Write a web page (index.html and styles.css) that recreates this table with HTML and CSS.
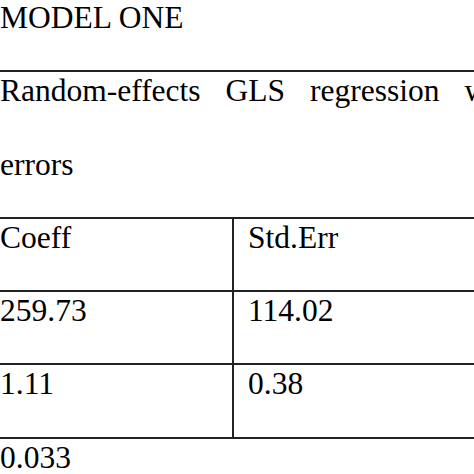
FILE: index.html
```html
<html>
    <head>
        <meta charset="UTF-8">
        <title>Model one</title>
        <meta name="viewport" content="width=device-width, initial-scale=1.0">
        <link rel="stylesheet" href="styles.css">
    </head>
    <body>
        <div class="sheet">
            <div class="row">
                <div class="cell cell-wide"><p>MODEL ONE</p></div>
            </div>
            <div class="row">
                <div class="cell cell-wide">
                    <p>
                        <span class="line-full">Random-effects GLS regression with robust standard</span>
                        <span class="line">errors</span>
                    </p>
                </div>
            </div>
            <div class="row">
                <div class="cell cell-first"><p>Coeff</p></div>
                <div class="cell"><p>Std.Err</p></div>
            </div>
            <div class="row">
                <div class="cell cell-first"><p>259.73</p></div>
                <div class="cell"><p>114.02</p></div>
            </div>
            <div class="row">
                <div class="cell cell-first"><p>1.11</p></div>
                <div class="cell"><p>0.38</p></div>
            </div>
            <div class="row">
                <div class="cell cell-wide"><p>0.033</p></div>
            </div>
        </div>
    </body>
</html>
```

FILE: styles.css
```css
html {
    background-color: white;
}

body {
    margin: 0;
    overflow: hidden;
    font-family: "Liberation Serif", "Times New Roman", serif;
    font-size: 31.5px;
    color: black;
}

.sheet {
    width: 784px;
    margin: -1px 0 0 -16px;
    border-left: 2px solid #222;
}

.row {
    display: flex;
    border-bottom: 2px solid #222;
}

.cell {
    box-sizing: border-box;
    flex: 1;
    padding: 0 14px;
    line-height: 73.3px;
}

.cell-first {
    flex: 0 0 248px;
    border-right: 2px solid #222;
}

.cell p {
    margin: -18px 0 16px;
}

.line-full {
    display: block;
    text-align: justify;
    text-align-last: justify;
}

.line {
    display: block;
}
```
